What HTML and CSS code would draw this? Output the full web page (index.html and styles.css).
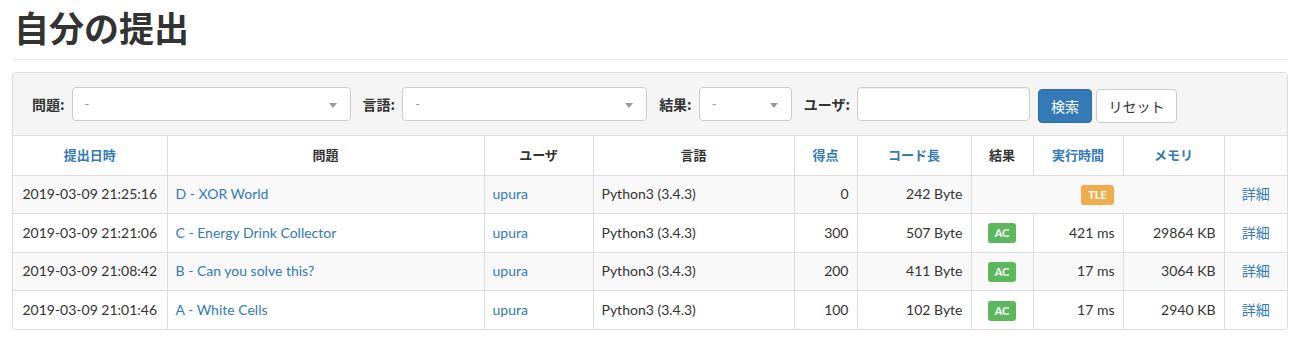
FILE: index.html
```html
<!DOCTYPE html>
<html lang="ja">
<head>
    <meta charset="UTF-8">
    <title>自分の提出</title>
    <link rel="stylesheet" href="styles.css">
</head>
<body>
    <div class="container">
        <h1 class="page-title">自分の提出</h1>
        <hr class="divider">
        <div class="panel">
            <div class="panel-heading">
                <div class="filter">
                    <label>問題:</label>
                    <div class="select sel-task"><span>-</span><i class="caret"></i></div>
                </div>
                <div class="filter">
                    <label>言語:</label>
                    <div class="select sel-lang"><span>-</span><i class="caret"></i></div>
                </div>
                <div class="filter">
                    <label>結果:</label>
                    <div class="select sel-status"><span>-</span><i class="caret"></i></div>
                </div>
                <div class="filter">
                    <label>ユーザ:</label>
                    <input class="text-input" type="text">
                </div>
                <button class="btn btn-primary">検索</button>
                <button class="btn btn-default">リセット</button>
            </div>
            <table class="table">
                <colgroup>
                    <col style="width:154px">
                    <col style="width:317px">
                    <col style="width:109px">
                    <col style="width:201px">
                    <col style="width:63px">
                    <col style="width:114px">
                    <col style="width:62px">
                    <col style="width:90px">
                    <col style="width:101px">
                    <col>
                </colgroup>
                <thead>
                    <tr>
                        <th class="sort">提出日時</th>
                        <th>問題</th>
                        <th>ユーザ</th>
                        <th>言語</th>
                        <th class="sort">得点</th>
                        <th class="sort">コード長</th>
                        <th>結果</th>
                        <th class="sort">実行時間</th>
                        <th class="sort">メモリ</th>
                        <th></th>
                    </tr>
                </thead>
                <tbody>
                    <tr>
                        <td class="center">2019-03-09 21:25:16</td>
                        <td><a href="#">D - XOR World</a></td>
                        <td><a href="#">upura</a></td>
                        <td>Python3 (3.4.3)</td>
                        <td class="right">0</td>
                        <td class="right">242 Byte</td>
                        <td class="center" colspan="3"><span class="label label-warning">TLE</span></td>
                        <td class="center"><a href="#">詳細</a></td>
                    </tr>
                    <tr>
                        <td class="center">2019-03-09 21:21:06</td>
                        <td><a href="#">C - Energy Drink Collector</a></td>
                        <td><a href="#">upura</a></td>
                        <td>Python3 (3.4.3)</td>
                        <td class="right">300</td>
                        <td class="right">507 Byte</td>
                        <td class="center"><span class="label label-success">AC</span></td>
                        <td class="right">421 ms</td>
                        <td class="right">29864 KB</td>
                        <td class="center"><a href="#">詳細</a></td>
                    </tr>
                    <tr>
                        <td class="center">2019-03-09 21:08:42</td>
                        <td><a href="#">B - Can you solve this?</a></td>
                        <td><a href="#">upura</a></td>
                        <td>Python3 (3.4.3)</td>
                        <td class="right">200</td>
                        <td class="right">411 Byte</td>
                        <td class="center"><span class="label label-success">AC</span></td>
                        <td class="right">17 ms</td>
                        <td class="right">3064 KB</td>
                        <td class="center"><a href="#">詳細</a></td>
                    </tr>
                    <tr>
                        <td class="center">2019-03-09 21:01:46</td>
                        <td><a href="#">A - White Cells</a></td>
                        <td><a href="#">upura</a></td>
                        <td>Python3 (3.4.3)</td>
                        <td class="right">100</td>
                        <td class="right">102 Byte</td>
                        <td class="center"><span class="label label-success">AC</span></td>
                        <td class="right">17 ms</td>
                        <td class="right">2940 KB</td>
                        <td class="center"><a href="#">詳細</a></td>
                    </tr>
                </tbody>
            </table>
        </div>
    </div>
</body>
</html>
```

FILE: styles.css
```css
* {
    box-sizing: border-box;
}

body {
    margin: 0;
    padding: 0;
    font-family: Lato, "Noto Sans CJK JP", sans-serif;
    font-size: 14px;
    color: #333;
    background: #fff;
}

a {
    color: #337ab7;
    text-decoration: none;
}

.container {
    padding: 0 12px 0 12px;
}

.page-title {
    margin: 5px 0 0 2px;
    font-size: 35px;
    line-height: 44px;
    font-weight: bold;
    font-family: "Noto Sans CJK JP", sans-serif;
    color: #333;
}

.divider {
    margin: 10px 0 12px 0;
    border: 0;
    border-top: 1px solid #eee;
}

.panel {
    border: 1px solid #ddd;
    border-radius: 4px;
    box-shadow: 0 1px 1px rgba(0,0,0,0.05);
    overflow: hidden;
}

.panel-heading {
    background-color: #f5f5f5;
    border-bottom: 1px solid #ddd;
    padding: 14px 18px 14px 19px;
    display: flex;
    align-items: center;
}

.filter {
    display: flex;
    align-items: center;
    margin-right: 12px;
}

.filter label {
    font-weight: bold;
    margin-right: 7px;
    font-family: "Noto Sans CJK JP", sans-serif;
}

.select {
    position: relative;
    height: 34px;
    background: #fff;
    border: 1px solid #ccc;
    border-radius: 4px;
    padding: 0 12px;
    display: flex;
    align-items: center;
    color: #999;
    font-size: 13px;
}

.select .caret {
    position: absolute;
    right: 13px;
    top: 15px;
    width: 0;
    height: 0;
    border-left: 4px solid transparent;
    border-right: 4px solid transparent;
    border-top: 5px solid #999;
}

.sel-task {
    width: 279px;
}

.sel-lang {
    width: 245px;
}

.sel-status {
    width: 93px;
}

.text-input {
    width: 173px;
    height: 34px;
    margin: 0;
    border: 1px solid #ccc;
    border-radius: 4px;
    background: #fff;
    box-shadow: inset 0 1px 1px rgba(0,0,0,0.075);
}

.btn {
    height: 34px;
    padding: 0;
    font-size: 14px;
    font-family: "Noto Sans CJK JP", sans-serif;
    border-radius: 4px;
    border: 1px solid transparent;
    cursor: pointer;
    margin: 2px 0 -2px 0;
    white-space: nowrap;
}

.btn-primary {
    width: 54px;
    margin-left: -4px;
    background-color: #337ab7;
    border-color: #2e6da4;
    color: #fff;
}

.btn-default {
    width: 81px;
    margin-left: 4px;
    background-color: #fff;
    border-color: #ccc;
    color: #333;
}

.table {
    width: 100%;
    border-collapse: collapse;
    table-layout: fixed;
}

.table th, .table td {
    padding: 8px 8px;
    line-height: 20px;
    height: 38.5px;
    border: 1px solid #ddd;
    white-space: nowrap;
    vertical-align: middle;
}

.table tr > :first-child {
    border-left: 0;
}

.table tr > :last-child {
    border-right: 0;
}

.table tbody tr:last-child td {
    border-bottom: 0;
}

.table thead th {
    border-top: 0;
    text-align: center;
    font-weight: bold;
    font-size: 13px;
    font-family: "Noto Sans CJK JP", sans-serif;
    height: 39px;
}

.table th.sort {
    color: #337ab7;
}

.table tbody tr:nth-child(odd) {
    background-color: #f9f9f9;
}

.center {
    text-align: center;
}

.right {
    text-align: right;
}

.label {
    display: inline-block;
    padding: 2px 7px 3px;
    font-size: 11px;
    font-weight: bold;
    line-height: 15px;
    color: #fff;
    border-radius: 3px;
    vertical-align: middle;
}

.label-success {
    background-color: #5cb85c;
}

.label-warning {
    background-color: #f0ad4e;
}
```
